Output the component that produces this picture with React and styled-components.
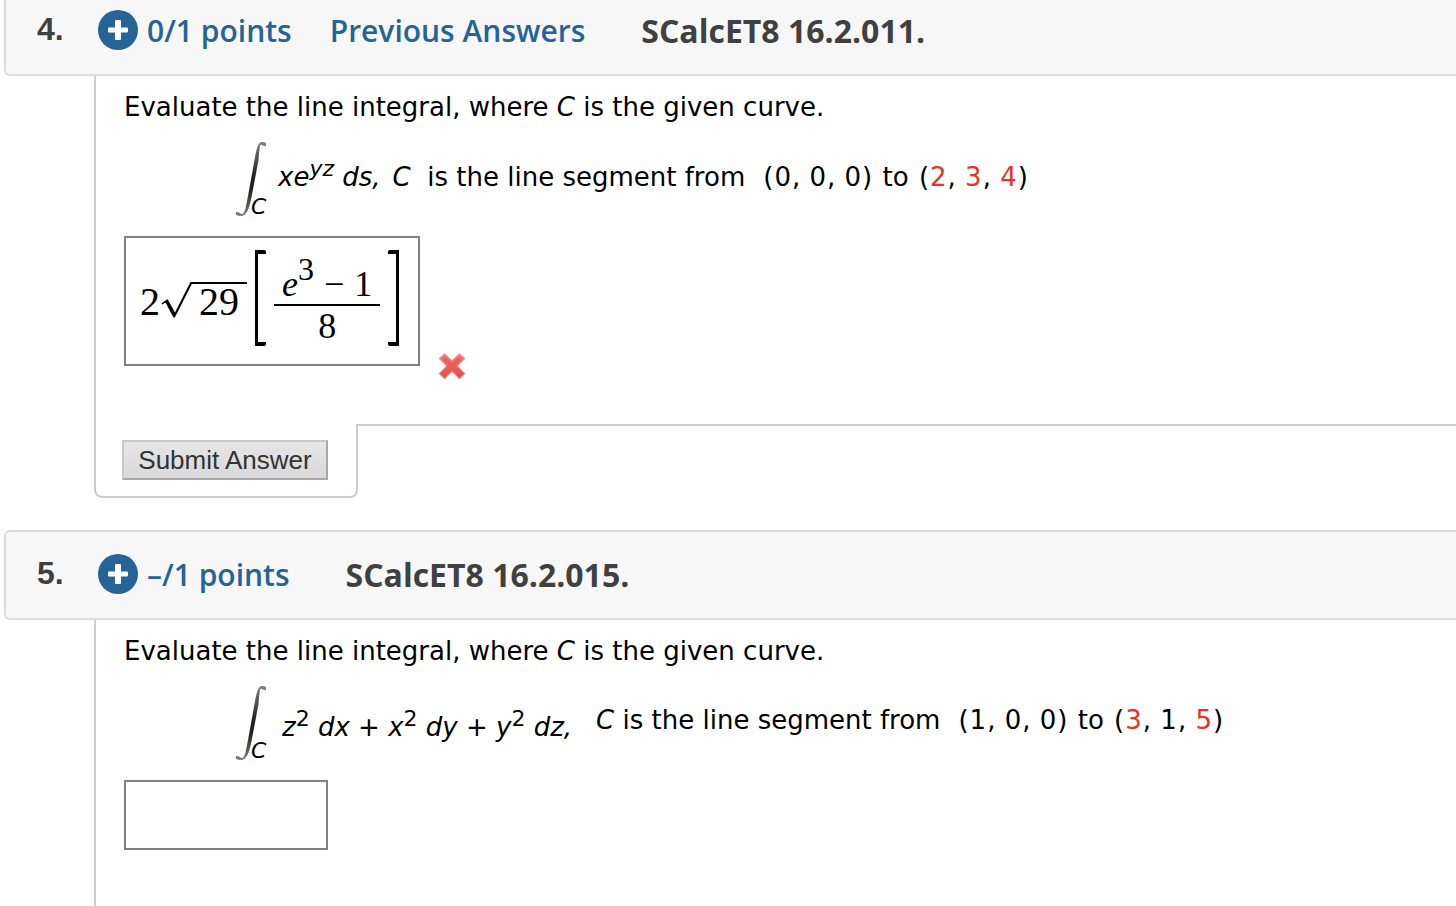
import React from 'react';
import styled, { createGlobalStyle } from 'styled-components';

const GlobalStyle = createGlobalStyle`
  body {
    margin: 0;
    background-color: #ffffff;
    color: #000000;
    font-family: Verdana, 'DejaVu Sans', sans-serif;
    font-size: 26px;
    line-height: 32px;
  }
`;

// Styled Components
const Page = styled.main`
  padding-left: 4px;
  overflow: hidden;
`;

const Question = styled.section`
  & + & {
    margin-top: 32px;
  }
`;

const Header = styled.header`
  display: flex;
  align-items: center;
  padding: ${(props) => (props.$continued ? '10px' : '22px')} 0 24px 31px;
  background-color: #f7f7f7;
  border: 2px solid #dddddd;
  border-right: none;
  border-top-width: ${(props) => (props.$continued ? '0' : '2px')};
  border-radius: ${(props) => (props.$continued ? '0 0 0 6px' : '6px 0 0 6px')};
  white-space: nowrap;
`;

const Number = styled.span`
  width: 61px;
  height: 40px;
  font-family: 'Liberation Sans', Arial, sans-serif;
  font-size: 32px;
  font-weight: 700;
  line-height: 38px;
  color: #404040;
`;

const PointsButton = styled.button`
  display: flex;
  gap: 9px;
  height: 40px;
  padding: 0;
  border: none;
  background: none;
  font-family: 'Open Sans', sans-serif;
  font-size: 30px;
  font-weight: 600;
  line-height: 42px;
  color: #266396;
  cursor: pointer;
`;

const HeaderLink = styled.a`
  height: 40px;
  margin-left: 38px;
  font-family: 'Open Sans', sans-serif;
  font-size: 30px;
  font-weight: 600;
  line-height: 42px;
  color: #266396;
  text-decoration: none;
`;

const Source = styled.h2`
  height: 40px;
  margin: 0 0 0 56px;
  font-family: 'Open Sans', sans-serif;
  font-size: 32px;
  font-weight: 700;
  line-height: 42px;
  color: #404040;
`;

const Body = styled.div`
  margin-left: 90px;
  padding: 15px 0 ${(props) => (props.$open ? '56px' : '44px')} 28px;
  border-left: 2px solid #cccccc;
`;

const Prompt = styled.p`
  margin: 0;
`;

const Formula = styled.div`
  display: flex;
  align-items: flex-start;
  margin: 17px 0 0 112px;
  white-space: nowrap;
`;

const IntegralSign = styled.span`
  position: relative;
  width: 30px;
  height: 76px;
  margin-right: ${(props) => (props.$wide ? '16px' : '12px')};
`;

const Bound = styled.sub`
  position: absolute;
  left: 15px;
  bottom: -5px;
  font-size: 22px;
  font-style: italic;
  line-height: 28px;
`;

const Expression = styled.span`
  padding-top: ${(props) => (props.$low ? '27px' : '21px')};
  margin-right: ${(props) => (props.$low ? '24px' : '12px')};
  font-style: italic;
`;

const Statement = styled.span`
  padding-top: ${(props) => (props.$high ? '20px' : '21px')};
`;

const Point = styled.span`
  margin-left: ${(props) => (props.$first ? '18px' : '2px')};
  margin-right: ${(props) => (props.$first ? '2px' : '0')};
`;

const Coordinate = styled.span`
  padding: 0 1px;
  color: ${(props) => (props.$red ? '#ea3323' : 'inherit')};
`;

const Sup = styled.sup`
  font-size: 22px;
  font-style: ${(props) => (props.$italic ? 'italic' : 'normal')};
  line-height: 0;
  vertical-align: 10px;
`;

const AnswerRow = styled.div`
  display: flex;
  align-items: flex-end;
  gap: 18px;
  margin-top: 20px;
`;

const MathBox = styled.div`
  display: flex;
  align-items: flex-start;
  margin-bottom: 14px;
  padding: 12px 19px 18px 14px;
  border: 2px solid #808080;
  font-family: 'Liberation Serif', 'Times New Roman', serif;
  font-size: 40px;
  line-height: 36px;
`;

const Coefficient = styled.span`
  padding-top: 34px;
`;

const Root = styled.span`
  display: flex;
  padding-top: 32px;
  margin-right: 8px;
`;

const Radicand = styled.span`
  padding: 0 8px 0 6px;
  border-top: 2px solid #000000;
`;

const Bracket = styled.span`
  align-self: stretch;
  width: 8px;
  border: solid #000000;
  border-width: ${(props) => (props.$right ? '4px 3px 4px 0' : '4px 0 4px 3px')};
  border-radius: ${(props) => (props.$right ? '2px 0 0 2px' : '0 2px 2px 0')};
`;

const Fraction = styled.span`
  display: flex;
  flex-direction: column;
  margin: 0 8px;
  font-size: 36px;
  line-height: 40px;
  text-align: center;
`;

const Numerator = styled.span`
  padding: 14px 8px 0;
  border-bottom: 2px solid #000000;
`;

const Exponent = styled.sup`
  font-size: 32px;
  line-height: 0;
  vertical-align: 16px;
`;

const Minus = styled.span`
  margin: 0 10px;
`;

const AnswerInput = styled.input`
  box-sizing: border-box;
  width: 204px;
  height: 70px;
  padding: 0 14px;
  border: 2px solid #808080;
  border-radius: 0;
  outline: none;
  background-color: #ffffff;
  font-family: inherit;
  font-size: 26px;
`;

const Footer = styled.div`
  display: flex;
  margin-left: 90px;
`;

const SubmitTab = styled.div`
  padding: 16px 28px 16px 26px;
  border: 2px solid #cccccc;
  border-top: none;
  border-radius: 0 0 8px 8px;
`;

const FooterLine = styled.div`
  flex: 1;
  margin-left: -2px;
  border-top: 2px solid #cccccc;
`;

const SubmitButton = styled.button`
  display: block;
  min-width: 206px;
  padding: 0 12px;
  border: 2px solid;
  border-color: #c8c8c8 #a8a8a8 #a8a8a8 #c8c8c8;
  background: linear-gradient(#e6e6e6, #d8d8d8);
  font-family: 'Liberation Sans', Arial, sans-serif;
  font-size: 26px;
  line-height: 36px;
  color: #333333;
  cursor: pointer;
`;

const PlusIcon = () => (
  <svg width="40" height="40" viewBox="0 0 40 40" aria-hidden="true">
    <circle cx="20" cy="20" r="20" fill="#266396" />
    <path
      d="M18 10h4q1 0 1 1v6.500h6q1 0 1 1v3q0 1-1 1h-6V29q0 1-1 1h-4q-1 0-1-1v-6.500h-6q-1 0-1-1v-3q0-1 1-1h6V11q0-1 1-1z"
      fill="#ffffff"
    />
  </svg>
);

const WrongIcon = () => (
  <svg width="28" height="28" viewBox="0 0 28 28" role="img" aria-label="Incorrect">
    <defs>
      <linearGradient id="wrong" x1="0" y1="0" x2="0" y2="1">
        <stop offset="0" stopColor="#f38080" />
        <stop offset="1" stopColor="#e34b48" />
      </linearGradient>
    </defs>
    <path
      d="M6.5 1.5L14 8.5L21.500 1.500L27 6.500L19.500 14L27 21.500L21.500 27L14 19.500L6.500 27L1 21.500L8.500 14L1 6.500Z"
      fill="url(#wrong)"
      stroke="#f5a3a1"
      strokeWidth="1"
      strokeLinejoin="round"
    />
    <path d="M7 7l14 14M21 7L7 21" stroke="#ea5552" strokeWidth="4" strokeLinecap="round" opacity="0.6" />
  </svg>
);

const Integral = ({ wide }) => (
  <IntegralSign $wide={wide}>
    <svg width="30" height="76" viewBox="0 0 30 76" role="img" aria-label="integral over">
      <defs>
        <linearGradient id="integral" x1="0" y1="0" x2="0" y2="1">
          <stop offset="0" stopColor="#808080" />
          <stop offset="0.45" stopColor="#222222" />
          <stop offset="0.65" stopColor="#222222" />
          <stop offset="1" stopColor="#808080" />
        </linearGradient>
      </defs>
      <path
        d="M0 72C3 71.500 4 74 6 74C9 74 10 66 12 56L18.500 20C20.500 9 22 2 26 2C28 2 29 2.500 30 3L30 6C27 6.500 26 4.500 25 4.500C23.500 5 23.500 11 22.500 20L16.500 52C14 67 11 76 5.500 76C3 76 1 75.500 0 75Z"
        fill="url(#integral)"
      />
    </svg>
    <Bound>C</Bound>
  </IntegralSign>
);

const Surd = () => (
  <svg width="33" height="36" viewBox="0 0 33 36" aria-hidden="true">
    <path
      d="M1.500 21.500L7.500 17L15 30.500L30.500 0H33V2H31.800L14.800 35.500H13.500L5.500 20.500L2.300 22.500Z"
      fill="#000000"
    />
  </svg>
);

const QuestionHeader = ({ number, points, previous, source, continued }) => (
  <Header $continued={continued}>
    <Number>{number}.</Number>
    <PointsButton type="button">
      <PlusIcon />
      {points} points
    </PointsButton>
    {previous && <HeaderLink href="#previous">Previous Answers</HeaderLink>}
    <Source>{source}</Source>
  </Header>
);

const CurvePrompt = () => (
  <Prompt>
    Evaluate the line integral, where <i>C</i> is the given curve.
  </Prompt>
);

const App = () => {
  return (
    <>
      <GlobalStyle />
      <Page>
        <Question>
          <QuestionHeader
            number={4}
            points="0/1"
            previous
            source="SCalcET8 16.2.011."
            continued
          />
          <Body>
            <CurvePrompt />
            <Formula>
              <Integral />
              <Expression>
                xe<Sup $italic>yz</Sup> ds,
              </Expression>
              <Statement>
                <i>C</i>&nbsp; is the line segment from
                <Point $first>
                  (<Coordinate>0</Coordinate>, <Coordinate>0</Coordinate>,{' '}
                  <Coordinate>0</Coordinate>)
                </Point>{' '}
                to{' '}
                <Point>
                  (<Coordinate $red>2</Coordinate>, <Coordinate $red>3</Coordinate>,{' '}
                  <Coordinate $red>4</Coordinate>)
                </Point>
              </Statement>
            </Formula>
            <AnswerRow>
              <MathBox>
                <Coefficient>2</Coefficient>
                <Root>
                  <Surd />
                  <Radicand>29</Radicand>
                </Root>
                <Bracket />
                <Fraction>
                  <Numerator>
                    <i>e</i>
                    <Exponent>3</Exponent>
                    <Minus>−</Minus>1
                  </Numerator>
                  <span>8</span>
                </Fraction>
                <Bracket $right />
              </MathBox>
              <WrongIcon />
            </AnswerRow>
          </Body>
          <Footer>
            <SubmitTab>
              <SubmitButton type="button">Submit Answer</SubmitButton>
            </SubmitTab>
            <FooterLine />
          </Footer>
        </Question>

        <Question>
          <QuestionHeader number={5} points="–/1" source="SCalcET8 16.2.015." />
          <Body $open>
            <CurvePrompt />
            <Formula>
              <Integral wide />
              <Expression $low>
                z<Sup>2</Sup> dx + x<Sup>2</Sup> dy + y<Sup>2</Sup> dz,
              </Expression>
              <Statement $high>
                <i>C</i> is the line segment from
                <Point $first>
                  (<Coordinate>1</Coordinate>, <Coordinate>0</Coordinate>,{' '}
                  <Coordinate>0</Coordinate>)
                </Point>{' '}
                to{' '}
                <Point>
                  (<Coordinate $red>3</Coordinate>, <Coordinate>1</Coordinate>,{' '}
                  <Coordinate $red>5</Coordinate>)
                </Point>
              </Statement>
            </Formula>
            <AnswerRow>
              <AnswerInput type="text" aria-label="Answer to question 5" />
            </AnswerRow>
          </Body>
        </Question>
      </Page>
    </>
  );
};

export default App;
